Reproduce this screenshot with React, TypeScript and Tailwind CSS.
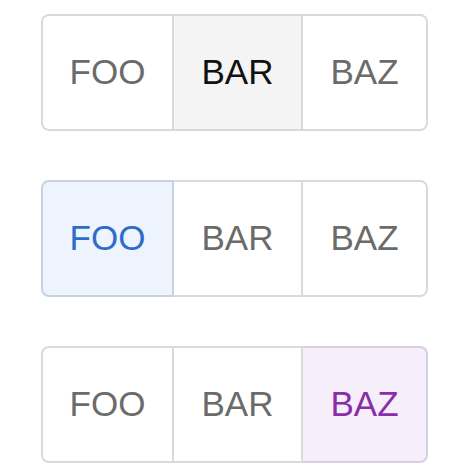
import React from "react";

type Variant = "gray" | "blue" | "purple";

const selStyles: Record<Variant, string> = {
  gray: "bg-[#f4f4f4] text-[#111111] border-[#d9d9d9]",
  blue: "bg-[#eef4fd] text-[#2f6cc9] border-[#c8d2df]",
  purple: "bg-[#f6effb] text-[#8b2ca8] border-[#d8cde2]",
};

const widths = ["w-[133px]", "w-[129px]", "flex-1"];

function Group({ selected, variant }: { selected: number; variant: Variant }) {
  const labels = ["FOO", "BAR", "BAZ"];
  return (
    <div className="flex w-[387px] h-[117px]">
      {labels.map((l, i) => {
        const isSel = i === selected;
        const shape =
          i === 0
            ? "border-2 rounded-l-[8px]"
            : i === 2
            ? "border-y-2 border-r-2 rounded-r-[8px]"
            : "border-y-2 border-r-2";
        const colors = isSel ? selStyles[variant] : "bg-white text-[#6b6b6b] border-[#dadada]";
        return (
          <div
            key={l}
            className={`${widths[i]} flex items-center justify-center text-[35px] ${shape} ${colors}`}
          >
            {l}
          </div>
        );
      })}
    </div>
  );
}

export default function App() {
  return (
    <div
      className="w-[474px] h-[474px] bg-white pt-[14px] pl-[41px] flex flex-col gap-[49px]"
      style={{ fontFamily: '"Liberation Sans", Arial, sans-serif' }}
    >
      <Group selected={1} variant="gray" />
      <Group selected={0} variant="blue" />
      <Group selected={2} variant="purple" />
    </div>
  );
}
